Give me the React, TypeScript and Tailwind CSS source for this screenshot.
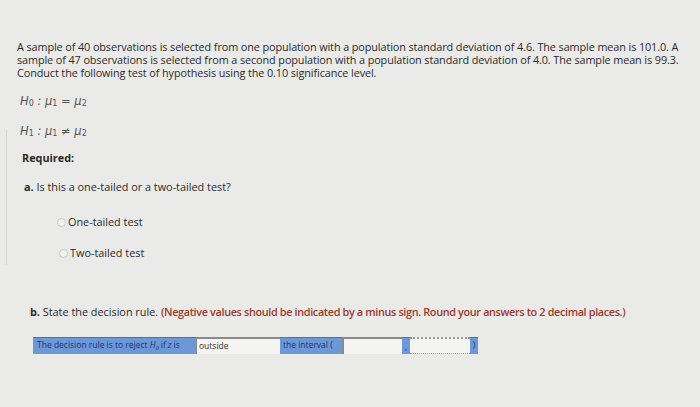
const Sub = ({ children }: { children: React.ReactNode }) => (
  <sub className="text-[8px] not-italic relative top-[1px] align-baseline">{children}</sub>
);

const Radio = () => (
  <span className="inline-block w-[9px] h-[9px] rounded-full border border-[#c8c8c8] bg-[#f2f2f2]" />
);

export default function App() {
  return (
    <div
      className="w-[700px] h-[407px] bg-[#eaeae8] text-[#2b2b2b] overflow-hidden relative"
      style={{ fontFamily: '"Open Sans", "Liberation Sans", sans-serif' }}
    >
      <div className="absolute left-[6px] top-[130px] h-[135px] w-px bg-[#d6d6d4]" />
      <div className="pl-[17px] pr-[10px] pt-[40px]">
        <p className="text-[10.85px] leading-[13px] tracking-[-0.1px]">
          A sample of 40 observations is selected from one population with a population standard deviation of 4.6. The sample mean is 101.0. A
          sample of 47 observations is selected from a second population with a population standard deviation of 4.0. The sample mean is 99.3.
          Conduct the following test of hypothesis using the 0.10 significance level.
        </p>

        <div className="mt-[14px] pl-[3px] text-[11.5px] text-[#555] italic" style={{ fontFamily: '"DejaVu Sans", sans-serif' }}>
          <div>
            H<Sub>0</Sub> : μ<Sub>1</Sub> = μ<Sub>2</Sub>
          </div>
          <div className="mt-[13px]">
            H<Sub>1</Sub> : μ<Sub>1</Sub> ≠ μ<Sub>2</Sub>
          </div>
        </div>

        <div className="mt-[9px] pl-[5px] text-[10.85px] font-bold">Required:</div>

        <div className="mt-[13px] pl-[7px] text-[10.85px]">
          <span className="font-bold">a.</span> Is this a one-tailed or a two-tailed test?
        </div>

        <div className="mt-[19px] pl-[40px] flex flex-col gap-[15px] text-[10.85px]">
          <label className="flex items-center gap-[1px]">
            <Radio />
            <span className="ml-[1px]">One-tailed test</span>
          </label>
          <label className="flex items-center gap-[1px] pl-[2px]">
            <Radio />
            <span className="ml-[1px]">Two-tailed test</span>
          </label>
        </div>

        <div className="mt-[42px] pl-[13px] text-[10.85px]">
          <span className="font-bold">b.</span> State the decision rule.{" "}
          <span className="font-semibold text-[#9b3a2e] tracking-[-0.35px]">
            (Negative values should be indicated by a minus sign. Round your answers to 2 decimal places.)
          </span>
        </div>

        <div className="mt-[17px] ml-[16px] flex h-[17px] text-[8.5px]">
          <div className="w-[163px] bg-[#6c98d8] text-[#1f3370] flex items-center pl-[4px] border-t border-[#4a72b0]">
            The decision rule is to reject <span className="italic mx-[2px]">H<sub className="text-[6px]">0</sub></span> if <span className="italic mx-[2px]">z</span> is
          </div>
          <div className="w-[84px] bg-[#f4f4f2] border-t-2 border-l border-[#8a8a8a] flex items-center pl-[2px] text-[#333]">
            outside
          </div>
          <div className="w-[62px] bg-[#6c98d8] text-[#1f3370] flex items-center pl-[3px] border-t border-[#4a72b0]">
            the interval (
          </div>
          <div className="w-[60px] bg-[#f4f4f2] border-t-2 border-l-2 border-[#8a8a8a]" />
          <div className="w-[8px] bg-[#6c98d8] text-[#1f3370] flex items-end justify-center border-t border-[#4a72b0]">,</div>
          <div className="w-[60px] bg-[#f4f4f2] border-t-2 border-b border-dotted border-[#9a9a9a]" />
          <div className="w-[8px] bg-[#6c98d8] text-[#1f3370] flex items-center justify-center border-t border-[#4a72b0]">)</div>
        </div>
      </div>
    </div>
  );
}
